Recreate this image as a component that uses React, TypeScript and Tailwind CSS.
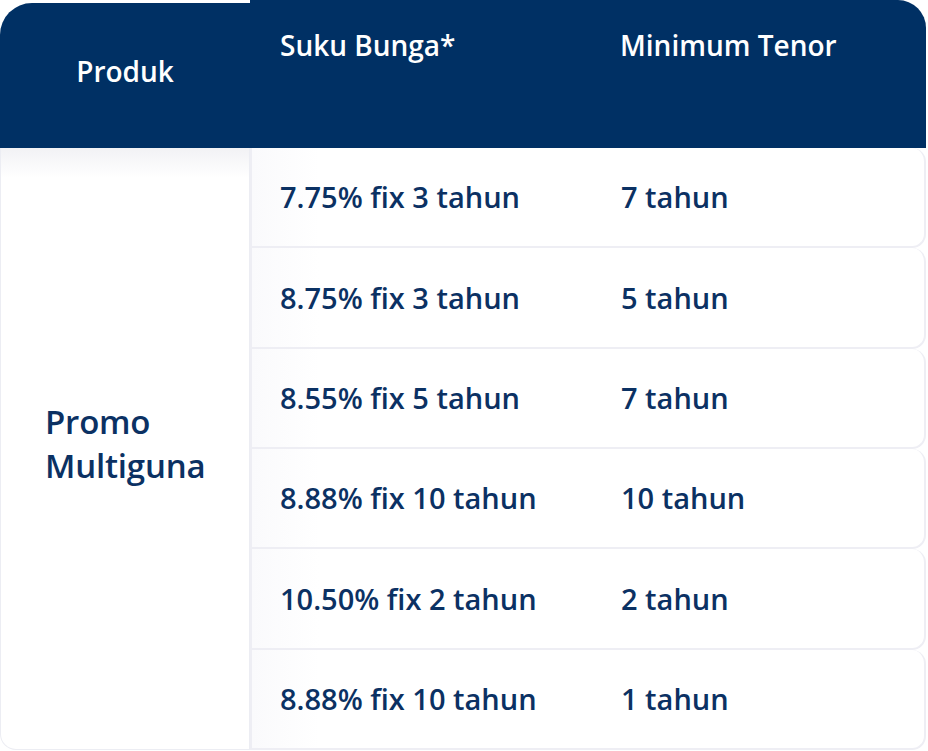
const rows = [
  { rate: '7.75% fix 3 tahun', tenor: '7 tahun' },
  { rate: '8.75% fix 3 tahun', tenor: '5 tahun' },
  { rate: '8.55% fix 5 tahun', tenor: '7 tahun' },
  { rate: '8.88% fix 10 tahun', tenor: '10 tahun' },
  { rate: '10.50% fix 2 tahun', tenor: '2 tahun' },
  { rate: '8.88% fix 10 tahun', tenor: '1 tahun' },
];

export default function App() {
  return (
    <main
      className="w-[928px] h-[751px] bg-white flex text-[#0b3163]"
      style={{ fontFamily: '"Open Sans", "Noto Sans", sans-serif' }}
    >
      {/* product column */}
      <div className="w-[250px] flex flex-col">
        <div className="mt-[3px] h-[145px] bg-[#003064] rounded-tl-[32px] flex items-center justify-center pb-[10px]">
          <span className="text-white text-[28px] font-semibold">Produk</span>
        </div>
        <div className="flex-1 mb-[1px] border border-t-0 border-[#ecedf3] rounded-bl-[16px] bg-gradient-to-b from-[#f2f2f5] via-white via-[5%] to-white flex items-center pl-[44px]">
          <span className="text-[33px] font-semibold leading-[44px] tracking-[-0.2px] pb-[10px]">
            Promo
            <br />
            Multiguna
          </span>
        </div>
      </div>

      {/* rates table */}
      <div className="flex-1 pr-[2px] flex flex-col">
        <div className="h-[148px] bg-[#003064] rounded-tr-[28px] flex pt-[24px] pl-[30px] text-white text-[28px] font-semibold leading-[42px]">
          <div className="w-[340px]">Suku Bunga*</div>
          <div>Minimum Tenor</div>
        </div>
        <div className="flex-1 mb-[1px] flex flex-col">
          {rows.map((r, i) => (
            <div
              key={i}
              className="flex-1 border-2 border-t-0 border-[#eeeef4] rounded-r-[14px] bg-gradient-to-r from-[#fafafc] via-white via-[10%] to-white flex items-center pl-[28px] text-[29px] font-semibold"
            >
              <div className="w-[341px]">{r.rate}</div>
              <div>{r.tenor}</div>
            </div>
          ))}
        </div>
      </div>
    </main>
  );
}
